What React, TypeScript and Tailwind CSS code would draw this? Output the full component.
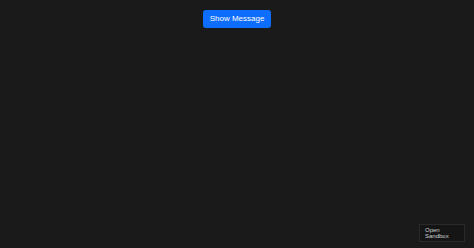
export default function App() {
  return (
    <div className="flex h-[248px] w-[474px] flex-col bg-[#1a1a1a] font-['Liberation_Sans',Arial,sans-serif]">
      <div className="flex justify-center pt-[10px]">
        <button className="h-[18px] rounded-[3px] bg-[#0d6efd] px-[7px] text-[8px] leading-[18px] text-white">
          Show Message
        </button>
      </div>
      <div className="mt-auto flex justify-end pb-[6px] pr-[9px]">
        <div className="w-[46px] border border-[#2a2a2a] bg-[#151515] px-[5px] py-[2px] text-[6px] leading-[6px] text-[#cfcfcf]">
          Open
          <br />
          Sandbox
        </div>
      </div>
    </div>
  )
}
